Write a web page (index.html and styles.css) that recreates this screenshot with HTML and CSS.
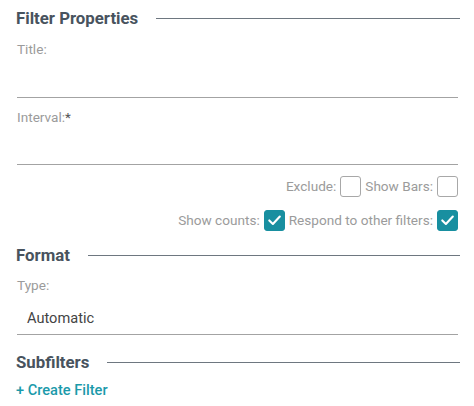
FILE: index.html
```html
<!DOCTYPE html>
<html lang="en">
<head>
<meta charset="utf-8">
<title>Filter Properties</title>
<link rel="stylesheet" href="styles.css">
</head>
<body>
<div class="panel">
  <h2 class="section-title first">Filter Properties</h2>
  <div class="field">
    <label class="field-label">Title:</label>
    <div class="field-input"></div>
  </div>
  <div class="field second">
    <label class="field-label">Interval:<span class="req">*</span></label>
    <div class="field-input"></div>
  </div>
  <div class="options">
    <div class="option-row">
      <span class="opt-label">Exclude:</span>
      <span class="checkbox"></span>
      <span class="opt-label">Show Bars:</span>
      <span class="checkbox"></span>
    </div>
    <div class="option-row">
      <span class="opt-label">Show counts:</span>
      <span class="checkbox checked"><svg viewBox="0 0 20 20" width="20" height="20"><path d="M4.5 10.5 L8.3 14.2 L15.6 6.4" fill="none" stroke="#fff" stroke-width="2.2" stroke-linecap="round" stroke-linejoin="round"/></svg></span>
      <span class="opt-label">Respond to other filters:</span>
      <span class="checkbox checked"><svg viewBox="0 0 20 20" width="20" height="20"><path d="M4.5 10.5 L8.3 14.2 L15.6 6.4" fill="none" stroke="#fff" stroke-width="2.2" stroke-linecap="round" stroke-linejoin="round"/></svg></span>
    </div>
  </div>
  <h2 class="section-title format">Format</h2>
  <div class="field type">
    <label class="field-label">Type:</label>
    <div class="field-input select"><span class="select-value">Automatic</span></div>
  </div>
  <h2 class="section-title subfilters">Subfilters</h2>
  <a class="create-link" href="#">+ Create Filter</a>
</div>
</body>
</html>
```

FILE: styles.css
```css
html, body {
  margin: 0;
  padding: 0;
  background: #ffffff;
}

body {
  font-family: Roboto, "Noto Sans", "Liberation Sans", sans-serif;
  color: #4a5560;
}

.panel {
  padding: 0 14px 0 16px;
  display: flex;
  flex-direction: column;
}

.section-title {
  margin: 0;
  height: 30px;
  display: flex;
  align-items: center;
  font-size: 16.8px;
  font-weight: 700;
  color: #48535e;
}

.section-title::after {
  content: "";
  flex: 1;
  height: 1px;
  background: #6e7780;
  margin-left: 18px;
}

.section-title.first { margin-top: 3px; }
.section-title.format { margin-top: 3px; }
.section-title.subfilters { margin-top: 12px; }

.field {
  margin: 9px 2px 0 1px;
  display: flex;
  flex-direction: column;
}

.field.second { margin-top: 12px; }
.field.type { margin-top: 8px; }

.field-label {
  font-size: 13.6px;
  line-height: 15px;
  color: #9b9b9b;
}

.req {
  color: #555;
}

.field-input {
  height: 40px;
  border-bottom: 1px solid #a3a3a3;
}

.field.second .field-input {
  height: 39px;
}

.field-input.select {
  height: 42px;
  display: flex;
  align-items: flex-end;
  box-sizing: border-box;
  padding: 0 0 8px 10px;
}

.select-value {
  font-size: 14.6px;
  line-height: 16px;
  color: #444;
}

.options {
  margin: 4px 2px 0 0;
  display: flex;
  flex-direction: column;
}

.option-row {
  height: 34px;
  display: flex;
  align-items: center;
  justify-content: flex-end;
  gap: 4px;
}

.opt-label {
  font-size: 13.6px;
  color: #9b9b9b;
}

.checkbox {
  width: 21px;
  height: 21px;
  box-sizing: border-box;
  border: 1px solid #a8a8a8;
  border-radius: 3px;
  background: #fff;
  display: flex;
  align-items: center;
  justify-content: center;
}

.checkbox.checked {
  background: #188fa0;
  border-color: #188fa0;
}

.create-link {
  margin-top: 5px;
  font-size: 14.6px;
  line-height: 16px;
  font-weight: 500;
  color: #1b9aaa;
  text-decoration: none;
  align-self: flex-start;
}
```
